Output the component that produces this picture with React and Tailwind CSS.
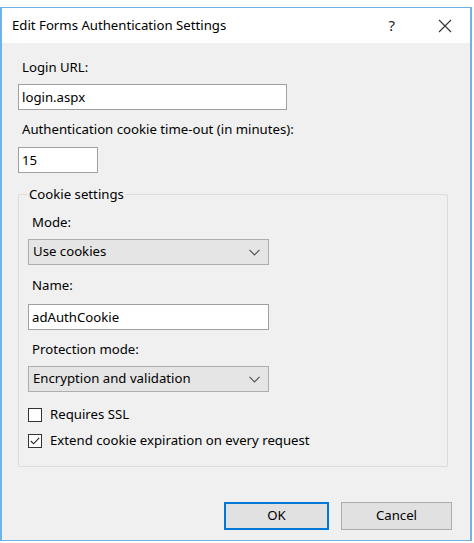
export default function App() {
  const font = { fontFamily: '"Noto Sans", "Open Sans", sans-serif' };
  return (
    <div className="w-[474px] h-[543px] bg-white pt-[7px] text-[13.2px] text-black" style={font}>
      <div className="w-[472px] h-[534px] border-x-2 border-t border-b border-[#72b1e6] bg-[#f0f0f0] flex flex-col">
        {/* Title bar */}
        <div className="h-[35px] bg-white flex items-center pl-[10px] shrink-0">
          <span className="text-[13.2px] leading-none">Edit Forms Authentication Settings</span>
          <span className="ml-auto mr-[43px] text-[15px] leading-none text-[#222]">?</span>
          <svg width="14" height="14" viewBox="0 0 14 14" className="mr-[18px]">
            <path d="M1 1 L13 13 M13 1 L1 13" stroke="#333" strokeWidth="1.1" />
          </svg>
        </div>

        {/* Body */}
        <div className="flex flex-col pl-[16px] pt-[15px]">
          <div className="leading-[19px] pl-[4px]">Login URL:</div>
          <input
            readOnly
            value="login.aspx"
            className="mt-[7px] w-[269px] h-[26px] border border-[#a0a0a0] bg-white px-[3px] outline-none"
          />
          <div className="mt-[10px] leading-[19px] pl-[4px]">Authentication cookie time-out (in minutes):</div>
          <input
            readOnly
            value="15"
            className="mt-[8px] w-[80px] h-[26px] border border-[#a0a0a0] bg-white px-[3px] outline-none"
          />

          <fieldset className="mt-[12px] w-[430px] border border-[#dcdcdc] pl-[9px] pb-[16px] rounded-[2px]">
            <legend className="ml-[-1px] px-[2px] leading-[19px]">Cookie settings</legend>
            <div className="flex flex-col">
              <div className="mt-[9px] leading-[19px] pl-[4px]">Mode:</div>
              <Select value="Use cookies" />
              <div className="mt-[11px] leading-[19px] pl-[4px]">Name:</div>
              <input
                readOnly
                value="adAuthCookie"
                className="mt-[9px] w-[241px] h-[26px] border border-[#a0a0a0] bg-white px-[3px] outline-none"
              />
              <div className="mt-[10px] leading-[19px] pl-[4px]">Protection mode:</div>
              <Select value="Encryption and validation" />
              <Check label="Requires SSL" className="mt-[13px]" />
              <Check label="Extend cookie expiration on every request" checked className="mt-[7px]" />
            </div>
          </fieldset>

          <div className="mt-[35px] flex justify-end gap-[12px] pr-[18px]">
            <button className="w-[105px] h-[28px] border-2 border-[#0078d7] bg-[#e1e1e1]">OK</button>
            <button className="w-[111px] h-[28px] border border-[#adadad] bg-[#e1e1e1]">Cancel</button>
          </div>
        </div>
      </div>
    </div>
  );
}

function Select({ value }) {
  return (
    <div className="mt-[7px] w-[241px] h-[26px] border border-[#adadad] bg-[#e5e5e5] flex items-center pl-[4px] pr-[8px]">
      <span>{value}</span>
      <svg width="11" height="7" viewBox="0 0 11 7" className="ml-auto">
        <path d="M0.5 0.8 L5.5 5.8 L10.5 0.8" fill="none" stroke="#555" strokeWidth="1.2" />
      </svg>
    </div>
  );
}

function Check({ label, checked, className }) {
  return (
    <div className={`flex items-center h-[19px] ${className}`}>
      <div className="w-[14px] h-[14px] border border-[#333] bg-white flex items-center justify-center">
        {checked && (
          <svg width="10" height="8" viewBox="0 0 10 8">
            <path d="M0.8 4 L3.6 6.8 L9.2 0.8" fill="none" stroke="#222" strokeWidth="1.1" />
          </svg>
        )}
      </div>
      <span className="ml-[8px] leading-[19px]">{label}</span>
    </div>
  );
}
